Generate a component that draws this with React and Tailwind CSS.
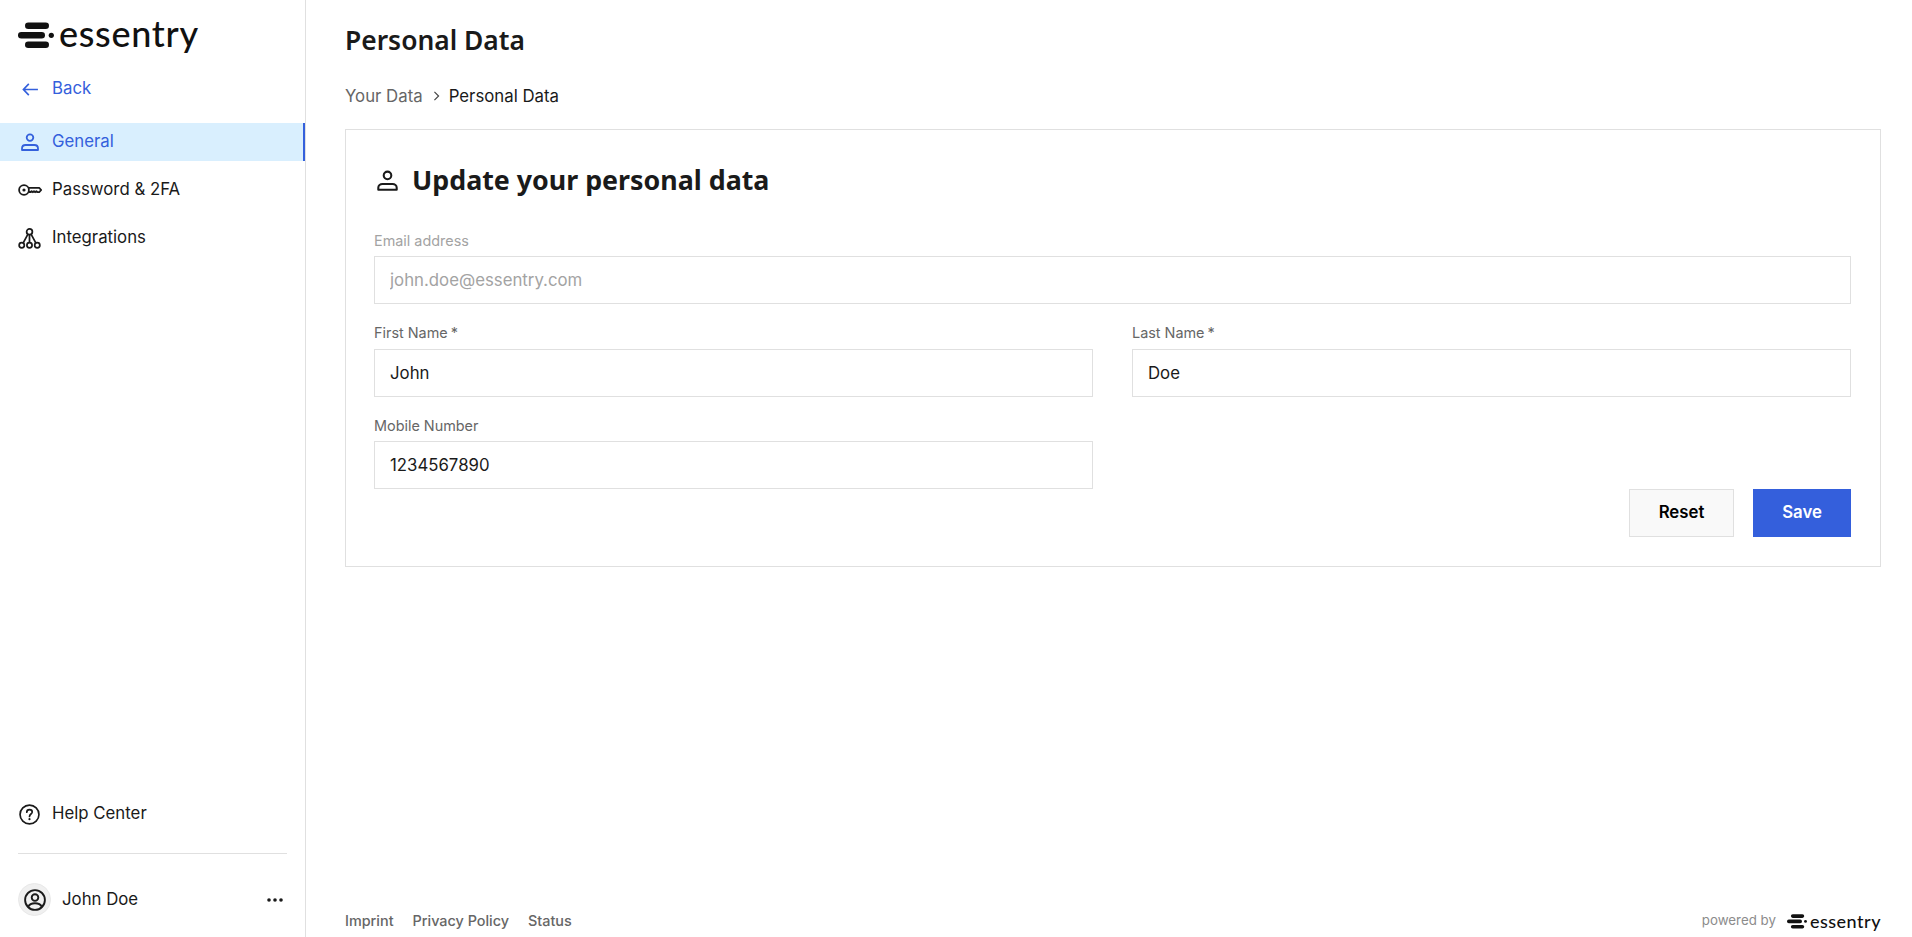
const Person = ({ className }) => (
  <svg viewBox="0 0 20 20" className={className} fill="none" stroke="currentColor" strokeWidth="1.8">
    <circle cx="10" cy="5.6" r="3.3" />
    <path d="M2 18v-1.600c0-2.100 1.700-3.400 3.600-3.400h8.800c1.900 0 3.600 1.300 3.600 3.400V18z" strokeLinejoin="round" />
  </svg>
);
const Key = () => (
  <svg viewBox="0 0 24 12" className="w-[24px] h-[12px]" fill="none" stroke="currentColor" strokeWidth="1.8">
    <circle cx="6" cy="6" r="4.9" />
    <circle cx="6" cy="6" r="1.6" fill="currentColor" stroke="none" />
    <path d="M10.800 3.800h10.400l2 2.200-2 2.200h-1.600l-1.200-1.100-1.200 1.100-1.200-1.100-1.200 1.100-1.200-1.100-1 .9h-1.800" strokeLinejoin="round" />
  </svg>
);
const Nodes = () => (
  <svg viewBox="0 0 24 24" className="w-[23px] h-[23px]" fill="none" stroke="currentColor" strokeWidth="1.8">
    <circle cx="12" cy="5" r="3" />
    <circle cx="3.900" cy="19" r="2.700" />
    <circle cx="12" cy="19" r="2.700" />
    <circle cx="20.100" cy="19" r="2.700" />
    <path d="M10.400 7.500 5.300 16.800M13.600 7.500l5.100 9.300M12 8v8.400" />
  </svg>
);
const Help = () => (
  <svg viewBox="0 0 20 20" className="w-[21px] h-[21px] ml-[1px]" fill="none" stroke="currentColor" strokeWidth="1.6">
    <circle cx="10" cy="10" r="9" />
    <path d="M7.400 7.800c0-1.500 1.100-2.500 2.600-2.500s2.600 1 2.600 2.300c0 1.900-2.600 2-2.600 4.200" strokeLinecap="round" />
    <circle cx="10" cy="14.500" r="1.050" fill="currentColor" stroke="none" />
  </svg>
);
const Mark = ({ className }) => (
  <svg viewBox="0 0 36 27" className={className} fill="currentColor">
    <rect x="7" y="0.500" width="24" height="6.600" rx="3.300" />
    <rect x="0" y="10" width="27" height="6.600" rx="3.300" />
    <circle cx="33.300" cy="13.300" r="2.600" />
    <rect x="7" y="19.600" width="24" height="6.400" rx="3.200" />
  </svg>
);
const Field = ({ label, req, value, muted, tight, className = "" }) => (
  <div className={`flex flex-col ${className}`}>
    <label className={`text-[14.4px] leading-[17px] ${tight ? "mb-[7px]" : "mb-[8px]"} ${muted ? "text-[#a3a3a3]" : "text-[#666666]"}`}>
      {label}
      {req && <span className="ml-[3px]">*</span>}
    </label>
    <input
      readOnly
      value={value}
      className={`h-[48px] border border-[#e0e0e0] px-[15px] text-[16.800px] outline-none ${muted ? "text-[#a3a3a3]" : "text-[#1a1a1a]"}`}
    />
  </div>
);
const NavItem = ({ icon, children, className = "" }) => (
  <a className={`flex items-center h-[38px] pl-[18px] text-[16.800px] ${className}`}>
    <span className="w-[34px] flex items-center">{icon}</span>
    {children}
  </a>
);

export default function App() {
  return (
    <div className="flex h-[937px] w-full bg-white text-[#1a1a1a] font-['Inter',sans-serif] overflow-hidden">
      <aside className="w-[306px] shrink-0 border-r border-[#e0e0e0] flex flex-col">
        <div className="flex items-center pl-[18px] h-[70px] text-[#111111]">
          <Mark className="w-[36px] h-[27px] mr-[5px]" />
          <span className="font-['Lato',sans-serif] text-[36px] font-medium leading-none tracking-[0.7px] mb-[5px]">essentry</span>
        </div>
        <NavItem className="text-[#3460dc]" icon={
          <svg viewBox="0 0 18 14" className="w-[17px] h-[13px] ml-[4px]" fill="none" stroke="currentColor" strokeWidth="1.8"><path d="M17 7H1.500M7.200 1 1.400 7l5.800 6" /></svg>
        }>Back</NavItem>
        <NavItem className="mt-[15px] bg-[#d9effe] text-[#3460dc] border-r-2 border-[#3460dc]" icon={<Person className="w-[20px] h-[20px] ml-[2px]" />}>General</NavItem>
        <NavItem className="mt-[10px]" icon={<Key />}>Password &amp; 2FA</NavItem>
        <NavItem className="mt-[10px]" icon={<Nodes />}>Integrations</NavItem>
        <div className="mt-auto">
          <NavItem icon={<Help />}>Help Center</NavItem>
          <div className="mx-[18px] mt-[20px] border-t border-[#e0e0e0]" />
          <div className="flex items-center pl-[18px] pr-[22px] mt-[29px] mb-[21px]">
            <div className="w-[33px] h-[33px] rounded-full bg-[#f0f0f0] border border-[#e8e8e8] flex items-center justify-center">
              <svg viewBox="0 0 20 20" className="w-[22px] h-[22px]" fill="none" stroke="currentColor" strokeWidth="1.700">
                <circle cx="10" cy="10" r="9" />
                <circle cx="10" cy="7.800" r="3" />
                <path d="M3.800 16.200c1-2.200 3-3.200 6.200-3.200s5.200 1 6.200 3.200" />
              </svg>
            </div>
            <span className="ml-[11px] text-[16.800px]">John Doe</span>
            <svg viewBox="0 0 16 4" className="w-[16px] h-[4px] ml-auto" fill="currentColor"><circle cx="2" cy="2" r="1.800" /><circle cx="8" cy="2" r="1.800" /><circle cx="14" cy="2" r="1.800" /></svg>
          </div>
        </div>
      </aside>
      <main className="flex-1 flex flex-col pl-[39px] pr-[31px]">
        <h1 className="font-['Noto_Sans',sans-serif] font-semibold text-[26.400px] leading-[34px] mt-[23px]">Personal Data</h1>
        <nav className="flex items-center text-[16.800px] leading-[20px] mt-[29px]">
          <span className="text-[#666666]">Your Data</span>
          <svg viewBox="0 0 8 12" className="w-[7px] h-[10px] ml-[10px] mr-[9px] text-[#444444]" fill="none" stroke="currentColor" strokeWidth="1.400"><path d="m1.500 1 5 5-5 5" /></svg>
          <span>Personal Data</span>
        </nav>
        <section className="mt-[23px] border border-[#e0e0e0] pl-[28px] pr-[29px] pt-[33px] pb-[29px]">
          <div className="flex items-center h-[34px]">
            <Person className="w-[23px] h-[23px] ml-[2px]" />
            <h2 className="ml-[13px] font-['Noto_Sans',sans-serif] font-bold text-[26.800px] leading-[34px]">Update your personal data</h2>
          </div>
          <Field muted tight label="Email address" value="john.doe@essentry.com" className="mt-[35px]" />
          <div className="grid grid-cols-2 gap-x-[39px] mt-[20px]">
            <Field req label="First Name" value="John" />
            <Field req label="Last Name" value="Doe" />
          </div>
          <div className="grid grid-cols-2 gap-x-[39px] mt-[20px]">
            <Field tight label="Mobile Number" value="1234567890" />
          </div>
          <div className="flex justify-end gap-[19px]">
            <button className="w-[105px] h-[48px] border border-[#e0e0e0] bg-[#f9f9f9] text-[16.800px] font-semibold text-black">Reset</button>
            <button className="w-[98px] h-[48px] bg-[#345fdc] text-[16.800px] font-semibold text-white">Save</button>
          </div>
        </section>
        <footer className="mt-auto mb-[6px] h-[20px] flex items-center text-[14.400px] text-[#666666]">
          <div className="flex gap-[19px] font-medium">
            <a>Imprint</a><a>Privacy Policy</a><a>Status</a>
          </div>
          <div className="ml-auto flex items-center">
            <span className="text-[13.300px] text-[#8c8c8c] mr-[11px]">powered by</span>
            <Mark className="w-[20px] h-[15px] text-[#111111] mr-[3px]" />
            <span className="font-['Lato',sans-serif] text-[18px] leading-none text-[#111111] tracking-[0.500px] font-medium">essentry</span>
          </div>
        </footer>
      </main>
    </div>
  );
}
